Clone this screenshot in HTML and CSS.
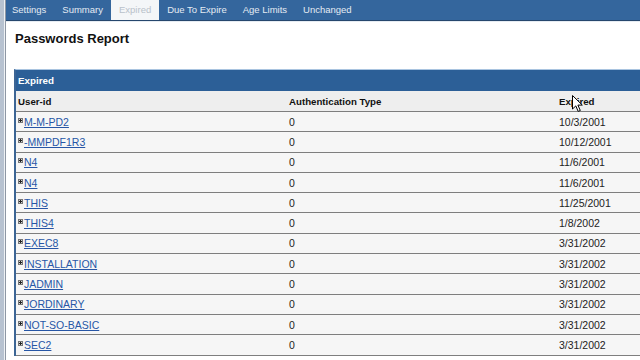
FILE: index.html
```html
<!DOCTYPE html>
<html lang="en">
<head>
  <meta charset="UTF-8">
  <title>Passwords Report</title>
  <link rel="stylesheet" href="styles.css">
</head>
<body>
  <div class="frame"></div>
  <div class="main">
    <nav class="tabs">
      <span class="tab first">Settings</span>
      <span class="tab">Summary</span>
      <span class="tab active">Expired</span>
      <span class="tab">Due To Expire</span>
      <span class="tab">Age Limits</span>
      <span class="tab">Unchanged</span>
    </nav>

    <h1>Passwords Report</h1>

    <div class="report">
      <div class="caption">Expired</div>
      <div class="row head">
        <div class="cell first">User-id</div>
        <div class="cell">Authentication Type</div>
        <div class="cell">Expired</div>
      </div>
      <div id="rows"></div>
    </div>
  </div>

  <svg class="cursor" width="12" height="18" viewBox="0 0 12 18">
    <path d="M0.5 0.5 L0.5 14 L3.8 10.9 L6.2 16.4 L8.3 15.5 L5.9 10.1 L10.3 10.1 Z" fill="#fff" stroke="#000" stroke-width="1"/>
  </svg>

  <script>
    var users = [
      ["M-M-PD2", "0", "10/3/2001"],
      ["-MMPDF1R3", "0", "10/12/2001"],
      ["N4", "0", "11/6/2001"],
      ["N4", "0", "11/6/2001"],
      ["THIS", "0", "11/25/2001"],
      ["THIS4", "0", "1/8/2002"],
      ["EXEC8", "0", "3/31/2002"],
      ["INSTALLATION", "0", "3/31/2002"],
      ["JADMIN", "0", "3/31/2002"],
      ["JORDINARY", "0", "3/31/2002"],
      ["NOT-SO-BASIC", "0", "3/31/2002"],
      ["SEC2", "0", "3/31/2002"]
    ];

    var plus = '<svg class="expand" width="5" height="5" viewBox="0 0 5 5">' +
      '<rect x="0.5" y="0.5" width="4" height="4" fill="#d4d4d4" stroke="#777" stroke-width="1"/>' +
      '<path d="M2.5 1 V4 M1 2.5 H4" stroke="#222" stroke-width="1"/></svg>';

    var html = "";
    users.forEach(function (u) {
      html += '<div class="row">' +
        '<div class="cell first">' + plus + '<a href="#">' + u[0] + '</a></div>' +
        '<div class="cell">' + u[1] + '</div>' +
        '<div class="cell">' + u[2] + '</div>' +
        '</div>';
    });
    document.getElementById("rows").innerHTML = html;
  </script>
</body>
</html>
```

FILE: styles.css
```css
html, body {
  margin: 0;
  height: 100%;
  overflow: hidden;
}
body {
  display: flex;
  background: #fff;
  font-family: "Liberation Sans", Arial, sans-serif;
  color: #222;
}
.frame {
  width: 6px;
  flex: none;
  background: linear-gradient(to right, #b7c2d0 0 4px, #eef1f4 4px 5px, #8e97a4 5px 6px);
}
.main {
  flex: 1;
  min-width: 0;
}
.tabs {
  display: flex;
  height: 20px;
  background: #34669d;
  border-bottom: 1px solid #26476d;
  box-shadow: 0 1px 0 #e6ecf2;
}
.tab {
  padding: 0 8px;
  font-size: 9.5px;
  line-height: 20px;
  color: #e4ebf3;
  white-space: nowrap;
}
.tab.first {
  padding-left: 6px;
}
.tab.active {
  background: #f4f6f8;
  color: #b9c1ca;
}
h1 {
  margin: 11px 0 0 9px;
  font-size: 13px;
  line-height: 14px;
  font-weight: bold;
  color: #111;
}
.report {
  margin: 23px 0 0 8px;
  border-top: 1px solid #a9c4e0;
  border-left: 2px solid #3c6595;
}
.caption {
  height: 21px;
  line-height: 21px;
  padding-left: 2px;
  background: #2c5f97;
  color: #fff;
  font-size: 9.8px;
  font-weight: bold;
}
.row {
  display: grid;
  grid-template-columns: 270px 270px 1fr;
  height: 20.3px;
  box-sizing: border-box;
  align-items: center;
  background: #f6f6f6;
  border-bottom: 1px solid #7e7e7e;
  font-size: 10.5px;
}
.row.head {
  height: 21px;
  background: #eeeeee;
  font-size: 9.7px;
  font-weight: bold;
  color: #111;
}
.cell {
  padding-left: 3px;
  white-space: nowrap;
}
.cell.first {
  padding-left: 2px;
}
.expand {
  vertical-align: 3px;
  margin-right: 1px;
}
.cell a {
  color: #2756a6;
}
.cursor {
  position: absolute;
  left: 572px;
  top: 95px;
}
```
